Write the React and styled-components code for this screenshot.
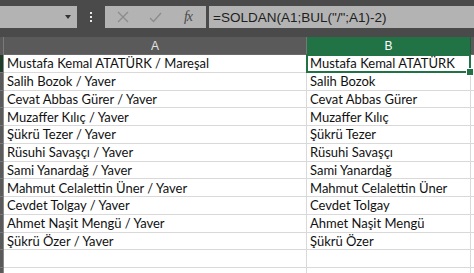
import styled, { createGlobalStyle } from "styled-components";

const GlobalStyle = createGlobalStyle`
  html, body {
    margin: 0;
    padding: 0;
    background: #4a4a4a;
    overflow: hidden;
  }
  * {
    box-sizing: border-box;
  }
`;

const GREEN = "#217346";

const Page = styled.div`
  width: 474px;
  height: 273px;
  display: flex;
  flex-direction: column;
  background: #ffffff;
  overflow: hidden;
`;

const Toolbar = styled.div`
  height: 37px;
  flex-shrink: 0;
  background: #4a4a4a;
  display: flex;
  align-items: flex-start;
  padding-top: 6px;
`;

const NameBox = styled.div`
  width: 77px;
  height: 22px;
  background: #b3b3b3;
  position: relative;
  display: flex;
  align-items: center;
  justify-content: flex-end;
  padding-right: 6px;
`;

const Caret = styled.span`
  width: 0;
  height: 0;
  border-left: 3px solid transparent;
  border-right: 3px solid transparent;
  border-top: 4px solid #333;
`;

const Dots = styled.div`
  width: 28px;
  height: 22px;
  display: flex;
  flex-direction: column;
  align-items: center;
  justify-content: center;
  gap: 2px;

  span {
    width: 2px;
    height: 2px;
    background: #e8e8e8;
  }
`;

const ButtonBar = styled.div`
  width: 101px;
  height: 22px;
  background: #b3b3b3;
  display: flex;
  align-items: center;
  padding-left: 12px;
  gap: 0;
`;

const ToolBtn = styled.span`
  width: ${(p) => p.$w}px;
  display: flex;
  justify-content: center;
  align-items: center;
`;

const Fx = styled.span`
  font-family: "Liberation Serif", serif;
  font-style: italic;
  font-size: 14px;
  color: #4a4a4a;
  letter-spacing: -1px;
`;

const Formula = styled.div`
  flex: 1;
  height: 22px;
  margin-left: 3px;
  background: #b3b3b3;
  display: flex;
  align-items: center;
  padding-left: 4px;
  font-family: "Liberation Sans", Arial, sans-serif;
  font-size: 13.5px;
  color: #1e1e1e;
  white-space: nowrap;
`;

const Grid = styled.div`
  display: grid;
  grid-template-columns: 4px 303px 164px 1fr;
  grid-template-rows: 18px;
  grid-auto-rows: 17.75px;
  background: #ffffff;
`;

const Corner = styled.div`
  background: #5a5a5a;
  border-right: 1px solid #7a7a7a;
`;

const ColHead = styled.div`
  background: ${(p) => (p.$active ? GREEN : "#5a5a5a")};
  color: ${(p) => (p.$active ? "#ffffff" : "#e4e4e4")};
  border-right: 1px solid ${(p) => (p.$active ? "#1b5e3a" : "#777")};
  border-bottom: 1px solid ${(p) => (p.$active ? "#1b5e3a" : "#6a6a6a")};
  font-family: "Liberation Sans", Arial, sans-serif;
  font-size: 12px;
  display: flex;
  align-items: center;
  justify-content: center;
`;

const RowHead = styled.div`
  background: ${(p) => (p.$active ? "#1d3d2a" : "#5a5a5a")};
  border-right: 1px solid #8a8a8a;
  border-bottom: 1px solid #777;
`;

const Cell = styled.div`
  position: relative;
  border-right: 1px solid #d9d9d9;
  border-bottom: 1px solid #d9d9d9;
  padding-left: 3px;
  display: flex;
  align-items: center;
  font-family: "Lato", "Open Sans", sans-serif;
  font-size: 13px;
  color: #111;
  white-space: nowrap;
  overflow: hidden;

  ${(p) =>
    p.$selected &&
    `
    overflow: visible;
    &::after {
      content: "";
      position: absolute;
      left: -1px;
      top: -1px;
      right: -1px;
      bottom: -1px;
      border: 2px solid ${GREEN};
      pointer-events: none;
    }
    &::before {
      content: "";
      position: absolute;
      right: -4px;
      bottom: -4px;
      width: 6px;
      height: 6px;
      background: ${GREEN};
      border: 1px solid #fff;
      z-index: 2;
    }
  `}
`;

const rows = [
  ["Mustafa Kemal ATATÜRK / Mareşal", "Mustafa Kemal ATATÜRK"],
  ["Salih Bozok / Yaver", "Salih Bozok"],
  ["Cevat Abbas Gürer / Yaver", "Cevat Abbas Gürer"],
  ["Muzaffer Kılıç / Yaver", "Muzaffer Kılıç"],
  ["Şükrü Tezer / Yaver", "Şükrü Tezer"],
  ["Rüsuhi Savaşçı / Yaver", "Rüsuhi Savaşçı"],
  ["Sami Yanardağ / Yaver", "Sami Yanardağ"],
  ["Mahmut Celalettin Üner / Yaver", "Mahmut Celalettin Üner"],
  ["Cevdet Tolgay / Yaver", "Cevdet Tolgay"],
  ["Ahmet Naşit Mengü / Yaver", "Ahmet Naşit Mengü"],
  ["Şükrü Özer / Yaver", "Şükrü Özer"],
  ["", ""],
  ["", ""],
];

const CancelIcon = () => (
  <svg width="12" height="12" viewBox="0 0 12 12">
    <path d="M1 1 L11 11 M11 1 L1 11" stroke="#8c8c8c" strokeWidth="1.3" fill="none" />
  </svg>
);

const CheckIcon = () => (
  <svg width="13" height="11" viewBox="0 0 13 11">
    <path d="M1 6 L4.5 9.5 L12 1" stroke="#8c8c8c" strokeWidth="1.4" fill="none" />
  </svg>
);

export default function App() {
  return (
    <>
      <GlobalStyle />
      <Page>
        <Toolbar>
          <NameBox>
            <Caret />
          </NameBox>
          <Dots>
            <span />
            <span />
            <span />
          </Dots>
          <ButtonBar>
            <ToolBtn $w={12}>
              <CancelIcon />
            </ToolBtn>
            <ToolBtn $w={52}>
              <CheckIcon />
            </ToolBtn>
            <ToolBtn $w={14}>
              <Fx>fx</Fx>
            </ToolBtn>
          </ButtonBar>
          <Formula>=SOLDAN(A1;BUL("/";A1)-2)</Formula>
        </Toolbar>
        <Grid>
          <Corner />
          <ColHead>A</ColHead>
          <ColHead $active>B</ColHead>
          <ColHead />
          {rows.map((r, i) => [
            <RowHead key={`h${i}`} $active={i === 0} />,
            <Cell key={`a${i}`}>{r[0]}</Cell>,
            <Cell key={`b${i}`} $selected={i === 0}>
              {r[1]}
            </Cell>,
            <Cell key={`c${i}`} />,
          ])}
        </Grid>
      </Page>
    </>
  );
}
